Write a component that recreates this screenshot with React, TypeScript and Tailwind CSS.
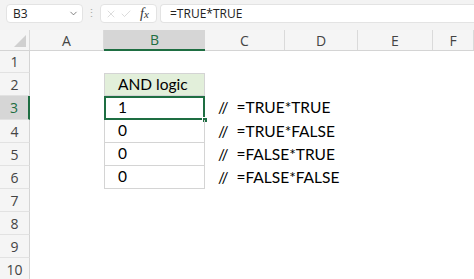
import { ChevronDown, X, Check } from "lucide-react";

const columns = [
  { label: "A", width: "w-[74px]" },
  { label: "B", width: "w-[101px]", selected: true },
  { label: "C", width: "w-[80px]" },
  { label: "D", width: "w-[73px]" },
  { label: "E", width: "w-[75px]" },
  { label: "F", width: "flex-1" },
];

const rowHeights = ["h-[22px]", "h-[23px]", "h-[24px]", "h-[23px]", "h-[23px]", "h-[23px]", "h-[23px]", "h-[23px]", "h-[23px]", "h-[23px]"];

const results = [
  { value: "1", note: "//  =TRUE*TRUE" },
  { value: "0", note: "//  =TRUE*FALSE" },
  { value: "0", note: "//  =FALSE*TRUE" },
  { value: "0", note: "//  =FALSE*FALSE" },
];

const uiFont = { fontFamily: '"Open Sans", "Noto Sans", sans-serif' };
const cellFont = { fontFamily: 'Lato, "Liberation Sans", sans-serif' };

function FormulaBar() {
  return (
    <div className="h-[30px] bg-[#f3f3f3] flex items-start pt-[4px] pl-[6px]" style={uiFont}>
      <div className="w-[77px] h-[19px] bg-white rounded-[4px] border border-[#e3e3e3] flex items-center pl-[6px] pr-[3px] justify-between">
        <span className="text-[12px] text-[#222] leading-none">B3</span>
        <ChevronDown size={11} strokeWidth={1.6} className="text-[#555]" />
      </div>
      <div className="w-[17px] h-[19px] flex items-center justify-center text-[#aaa] text-[11px]">⋮</div>
      <div className="w-[57px] h-[19px] bg-white rounded-[4px] border border-[#e3e3e3] flex items-center pl-[4px] gap-[3px]">
        <X size={12} strokeWidth={1.2} className="text-[#c4c4c4]" />
        <Check size={12} strokeWidth={1.2} className="text-[#c4c4c4]" />
        <span className="ml-[5px] text-[14px] italic text-[#333] leading-none" style={{ fontFamily: '"Liberation Serif", serif' }}>
          f<span className="text-[11px]">x</span>
        </span>
      </div>
      <div className="flex-1 h-[19px] ml-[3px] bg-white rounded-l-[4px] border border-r-0 border-[#e3e3e3] flex items-center pl-[9px]">
        <span className="text-[12px] text-[#222] leading-none">=TRUE*TRUE</span>
      </div>
    </div>
  );
}

function ColumnHeaders() {
  return (
    <div className="flex h-[21px] bg-[#f5f5f5] border-b border-[#d4d4d4]" style={uiFont}>
      <div className="w-[30px] relative border-r border-[#dadada]">
        <div className="absolute right-[3px] bottom-[3px] w-0 h-0 border-l-[12px] border-l-transparent border-b-[12px] border-b-[#d0d0d0]" />
      </div>
      {columns.map((col) => (
        <div
          key={col.label}
          className={`${col.width} flex items-center justify-center text-[14px] ${
            col.selected
              ? "bg-[#d6d6d6] text-[#1e6e42] border-b-2 border-[#1e6e42] -mb-px"
              : "text-[#444] border-r border-[#dadada]"
          }`}
        >
          {col.label}
        </div>
      ))}
    </div>
  );
}

export default function App() {
  return (
    <div className="w-[474px] h-[279px] overflow-hidden bg-white">
      <FormulaBar />
      <ColumnHeaders />
      <div className="flex flex-col">
        {rowHeights.map((h, i) => {
          const row = i + 1;
          const result = row >= 3 && row <= 6 ? results[row - 3] : null;
          const active = row === 3;
          return (
            <div key={row} className={`flex ${h}`}>
              <div
                className={`w-[30px] flex items-center justify-center text-[14px] border-b border-[#e2e2e2] ${
                  active
                    ? "bg-[#d6d6d6] text-[#1e6e42] border-r-2 border-r-[#1e6e42]"
                    : "bg-[#f5f5f5] text-[#444] border-r border-r-[#d4d4d4]"
                }`}
                style={uiFont}
              >
                {row}
              </div>
              <div className="w-[74px]" />
              <div className="w-[101px] relative" style={cellFont}>
                {row === 2 && (
                  <div className="h-full bg-[#e2efda] border border-[#d4d4d4] flex items-center pl-[13px] text-[15.5px] text-black">
                    AND logic
                  </div>
                )}
                {result && !active && (
                  <div className="h-full border-x border-b border-[#d4d4d4] flex items-center pl-[13px] text-[15.5px] text-black">
                    {result.value}
                  </div>
                )}
                {result && active && (
                  <div className="h-full border-2 border-[#1e6e42] flex items-center pl-[12px] text-[15.5px] text-black">
                    {result.value}
                    <div className="absolute -right-[3px] -bottom-[3px] w-[6px] h-[6px] bg-[#1e6e42] border border-white" />
                  </div>
                )}
              </div>
              <div className="flex-1 flex items-center pl-[13px] text-[15.5px] text-black whitespace-pre" style={cellFont}>
                {result?.note}
              </div>
            </div>
          );
        })}
      </div>
    </div>
  );
}
